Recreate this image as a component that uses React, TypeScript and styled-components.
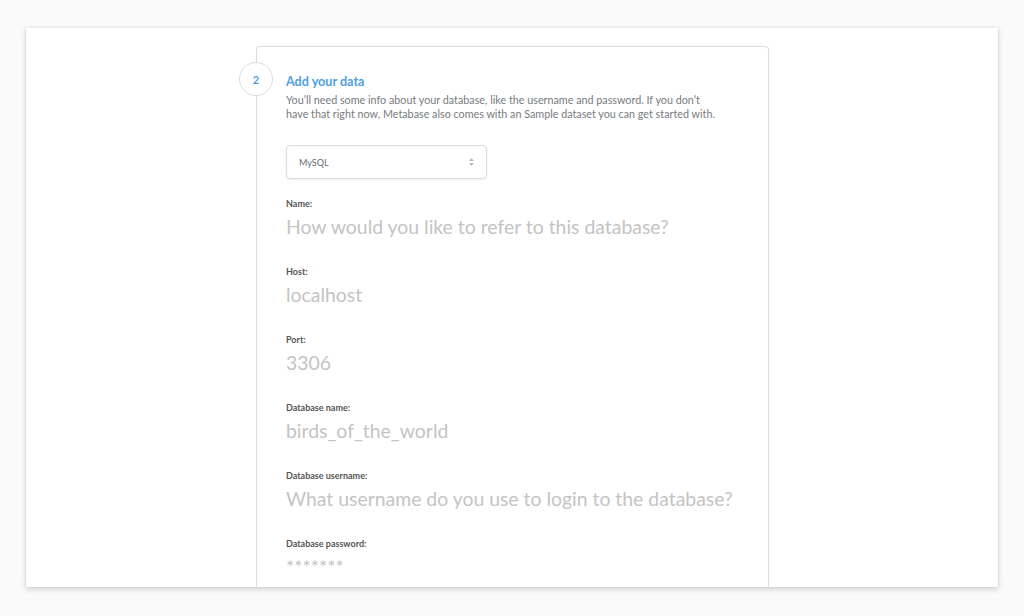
import React from 'react'
import styled, { createGlobalStyle } from 'styled-components'

const GlobalStyle = createGlobalStyle`
  html, body {
    margin: 0;
    padding: 0;
    background: #fafafa;
    font-family: Lato, "Open Sans", sans-serif;
  }
`

const Page = styled.div`
  box-sizing: border-box;
  height: 616px;
  padding: 28px 26px 29px;
`

const Window = styled.div`
  height: 100%;
  background: #fff;
  box-shadow: 0 2px 6px rgba(0, 0, 0, 0.18), 0 0 2px rgba(0, 0, 0, 0.08);
  overflow: hidden;
  display: flex;
  justify-content: center;
`

const Card = styled.section`
  position: relative;
  box-sizing: border-box;
  width: 513px;
  margin: 18px 0 0 1px;
  padding: 27px 30px 0 29px;
  border: 1px solid #dcdcdc;
  border-bottom: none;
  border-radius: 4px 4px 0 0;
`

const StepBadge = styled.div`
  position: absolute;
  left: -18px;
  top: 15px;
  width: 32px;
  height: 32px;
  border: 1px solid #dcdcdc;
  border-radius: 50%;
  background: #fff;
  color: #509ee3;
  font-size: 11px;
  font-weight: 700;
  display: flex;
  align-items: center;
  justify-content: center;
`

const Title = styled.h2`
  margin: 0;
  font-size: 12.6px;
  line-height: 16px;
  font-weight: 700;
  color: #509ee3;
`

const Description = styled.p`
  margin: 3px 0 0;
  font-size: 10.77px;
  line-height: 14px;
  color: #777b80;
  white-space: nowrap;
`

const SelectBox = styled.div`
  box-sizing: border-box;
  width: 201px;
  height: 34px;
  margin-top: 24px;
  padding: 0 11px 0 12px;
  border: 1px solid #dcdcdc;
  border-radius: 4px;
  box-shadow: 0 1px 2px rgba(0, 0, 0, 0.07);
  display: flex;
  align-items: center;
  justify-content: space-between;
  font-size: 9px;
  color: #666a70;
`

const Fields = styled.div`
  margin-top: 19px;
  display: flex;
  flex-direction: column;
  gap: 27px;
`

const Field = styled.div`
  display: flex;
  flex-direction: column;
  gap: 5px;
`

const Label = styled.label`
  font-size: 9px;
  line-height: 12px;
  font-weight: 700;
  color: #555;
`

const Placeholder = styled.div`
  font-size: 19.4px;
  line-height: 24px;
  color: #c4c4c4;
`

const Chevron = () => (
  <svg width="7" height="10" viewBox="0 0 7 10" fill="#b8bbc3">
    <path d="M3.5 1 L6 4 H1 Z" />
    <path d="M3.5 9 L6 6 H1 Z" />
  </svg>
)

const fields = [
  { label: 'Name:', placeholder: 'How would you like to refer to this database?' },
  { label: 'Host:', placeholder: 'localhost' },
  { label: 'Port:', placeholder: '3306' },
  { label: 'Database name:', placeholder: 'birds_of_the_world' },
  { label: 'Database username:', placeholder: 'What username do you use to login to the database?' },
  { label: 'Database password:', placeholder: '*******' },
]

const App = () => {
  return (
    <Page>
      <GlobalStyle />
      <Window>
        <Card>
          <StepBadge>2</StepBadge>
          <Title>Add your data</Title>
          <Description>
            You’ll need some info about your database, like the username and password. If you don’t
            <br />
            have that right now, Metabase also comes with an Sample dataset you can get started with.
          </Description>
          <SelectBox>
            <span>MySQL</span>
            <Chevron />
          </SelectBox>
          <Fields>
            {fields.map((f) => (
              <Field key={f.label}>
                <Label>{f.label}</Label>
                <Placeholder>{f.placeholder}</Placeholder>
              </Field>
            ))}
          </Fields>
        </Card>
      </Window>
    </Page>
  )
}

export default App
